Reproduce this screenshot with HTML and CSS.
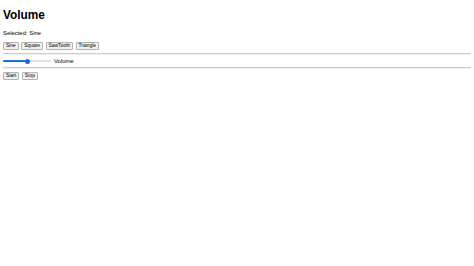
FILE: index.html
```html
<!DOCTYPE html>
<html>
  <head>
    <title>Volume</title>
    <link rel="stylesheet" href="styles.css">
  </head>
  <body>
    <h1 class="title">Volume</h1>
    <p class="selected">Selected: <span class="js-wave">Sine</span></p>

    <div class="button-row">
      <button class="wave-button">Sine</button>
      <button class="wave-button">Square</button>
      <button class="wave-button">SawTooth</button>
      <button class="wave-button">Triangle</button>
    </div>

    <hr class="divider">

    <div class="volume-row">
      <input type="range" class="volume-slider" min="0" max="100" value="50">
      <label class="volume-label">Volume</label>
    </div>

    <hr class="divider">

    <div class="button-row">
      <button class="wave-button">Start</button>
      <button class="wave-button">Stop</button>
    </div>
  </body>
</html>
```

FILE: styles.css
```css
body {
  margin: 0 3px;
  font-family: "Liberation Sans", Arial, sans-serif;
  color: black;
  background-color: white;
}
.title {
  font-size: 11.85px;
  margin: 8px 0 7.9px 0;
}
.selected {
  font-size: 5.9px;
  margin: 5.9px 0;
}
.button-row {
  display: flex;
  gap: 2.5px;
}
.wave-button {
  font-family: "Liberation Sans", Arial, sans-serif;
  font-size: 4.9px;
  line-height: 6px;
  padding: 0 2px;
  border: 1px solid #b3b3b3;
  border-radius: 1px;
  background-color: #f0f0f0;
  color: black;
}
.divider {
  border: none;
  border-top: 1px solid #cfcfcf;
  border-bottom: 1px solid #eeeeee;
  margin: 3px 0;
}
.volume-row {
  display: flex;
  align-items: center;
  height: 6.5px;
}
.volume-slider {
  -webkit-appearance: none;
  appearance: none;
  width: 48px;
  height: 6px;
  margin: 0 3px 0 0;
  background: transparent;
}
.volume-slider::-webkit-slider-runnable-track {
  height: 2px;
  border-radius: 1px;
  background: linear-gradient(to right, #1a6de0 51%, #e0e0e0 51%);
}
.volume-slider::-webkit-slider-thumb {
  -webkit-appearance: none;
  width: 5px;
  height: 5px;
  margin-top: -1.5px;
  border-radius: 50%;
  background-color: #1a6de0;
}
.volume-label {
  font-size: 5.9px;
}
```
